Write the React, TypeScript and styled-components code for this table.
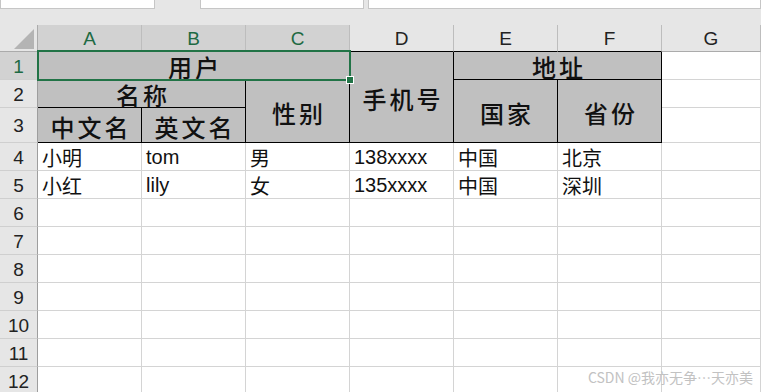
import React from "react";
import styled, { createGlobalStyle } from "styled-components";

const GlobalStyle = createGlobalStyle`
  html, body {
    margin: 0;
    padding: 0;
    background: #fff;
    overflow: hidden;
  }
  body {
    font-family: "Liberation Sans", "Noto Sans CJK SC", sans-serif;
  }
`;

/**
 * Styled
 */
const Page = styled.div`
  position: relative;
  width: 761px;
  height: 392px;
  overflow: hidden;
  background: #fff;
`;

const FormulaBar = styled.div`
  display: flex;
  align-items: flex-start;
  height: 25px;
  background: #e6e6e6;
`;

const Field = styled.div<{ $width?: number; $gap: number }>`
  box-sizing: border-box;
  height: 10px;
  margin-top: -1px;
  margin-left: ${(p) => p.$gap}px;
  ${(p) => (p.$width ? `width: ${p.$width}px;` : "flex: 1;")}
  background: #fff;
  border: 1px solid #c6c6c6;
`;

const Sheet = styled.div`
  display: grid;
  grid-template-columns: 38px repeat(6, 104px) 1fr;
  grid-template-rows: 27px 28px 28px 35px repeat(9, 28px);
`;

const Corner = styled.div`
  box-sizing: border-box;
  display: flex;
  justify-content: flex-end;
  align-items: flex-end;
  padding: 0 3px 2px 0;
  background: #e6e6e6;
  border-right: 1px solid #ababab;
  border-bottom: 1px solid #ababab;
`;

const Triangle = styled.div`
  width: 0;
  height: 0;
  border-left: 20px solid transparent;
  border-bottom: 20px solid #b4b4b4;
`;

const ColHead = styled.div<{ $sel?: boolean; $edge: string }>`
  box-sizing: border-box;
  display: flex;
  align-items: center;
  justify-content: center;
  padding-top: 2px;
  font-size: 19px;
  color: ${(p) => (p.$sel ? "#1d6a43" : "#222")};
  background: ${(p) => (p.$sel ? "#d2d2d2" : "#e6e6e6")};
  border-right: 1px solid #bdbdbd;
  border-bottom: 1px solid ${(p) => p.$edge};
`;

const RowHead = styled.div<{ $sel?: boolean }>`
  box-sizing: border-box;
  display: flex;
  align-items: center;
  justify-content: center;
  padding-top: 2px;
  font-size: 19px;
  color: ${(p) => (p.$sel ? "#1d6a43" : "#222")};
  background: ${(p) => (p.$sel ? "#d2d2d2" : "#e6e6e6")};
  border-right: 1px solid #9e9e9e;
  border-bottom: 1px solid #cfcfcf;
`;

const Title = styled.div<{ $col: string; $row: string }>`
  position: relative;
  box-sizing: border-box;
  grid-column: ${(p) => p.$col};
  grid-row: ${(p) => p.$row};
  display: flex;
  align-items: center;
  justify-content: center;
  padding-left: 3px;
  padding-top: 2px;
  font-family: "Noto Sans CJK SC", sans-serif;
  font-size: 24px;
  font-weight: 500;
  letter-spacing: 3px;
  color: #111;
  background: #c0c0c0;
  border-right: 1px solid #000;
  border-bottom: 1px solid #000;
`;

const Selection = styled.div`
  position: absolute;
  z-index: 1;
  top: -2px;
  left: -1px;
  right: -2px;
  bottom: -2px;
  border: 2px solid #217346;
  pointer-events: none;
`;

const Handle = styled.div`
  position: absolute;
  right: -5px;
  bottom: -5px;
  width: 6px;
  height: 6px;
  background: #217346;
  border: 1px solid #fff;
`;

const Cell = styled.div`
  box-sizing: border-box;
  display: flex;
  align-items: center;
  padding: 2px 0 0 4px;
  font-size: 20px;
  color: #111;
  white-space: nowrap;
  border-right: 1px solid #d4d4d4;
  border-bottom: 1px solid #d4d4d4;
`;

const Watermark = styled.div`
  position: absolute;
  right: 8px;
  bottom: 5px;
  font-family: "Noto Sans CJK SC", sans-serif;
  font-size: 14px;
  color: #c2c2c2;
  white-space: nowrap;
`;

const columns = ["A", "B", "C", "D", "E", "F", "G"];

const rows = [
  ["小明", "tom", "男", "138xxxx", "中国", "北京", ""],
  ["小红", "lily", "女", "135xxxx", "中国", "深圳", ""],
  ...Array.from({ length: 7 }, () => ["", "", "", "", "", "", ""]),
];

export default function App() {
  return (
    <Page>
      <GlobalStyle />
      <FormulaBar>
        <Field $width={155} $gap={0} />
        <Field $width={164} $gap={45} />
        <Field $gap={4} />
      </FormulaBar>
      <Sheet>
        <Corner>
          <Triangle />
        </Corner>
        {columns.map((c, i) => (
          <ColHead
            key={c}
            $sel={i < 3}
            $edge={i < 3 ? "#217346" : i < 6 ? "#000" : "#ababab"}
          >
            {c}
          </ColHead>
        ))}

        <Title $col="2 / 5" $row="2">
          用户
          <Selection>
            <Handle />
          </Selection>
        </Title>
        <Title $col="5" $row="2 / 5">手机号</Title>
        <Title $col="6 / 8" $row="2">地址</Title>
        <Title $col="2 / 4" $row="3">名称</Title>
        <Title $col="4" $row="3 / 5">性别</Title>
        <Title $col="6" $row="3 / 5">国家</Title>
        <Title $col="7" $row="3 / 5">省份</Title>
        <Title $col="2" $row="4">中文名</Title>
        <Title $col="3" $row="4">英文名</Title>

        {[1, 2, 3].map((n) => (
          <React.Fragment key={n}>
            <RowHead $sel={n === 1}>{n}</RowHead>
            <Cell />
          </React.Fragment>
        ))}

        {rows.map((row, r) => (
          <React.Fragment key={r}>
            <RowHead>{r + 4}</RowHead>
            {row.map((v, i) => (
              <Cell key={i}>{v}</Cell>
            ))}
          </React.Fragment>
        ))}
      </Sheet>
      <Watermark>CSDN @我亦无争…天亦美</Watermark>
    </Page>
  );
}
